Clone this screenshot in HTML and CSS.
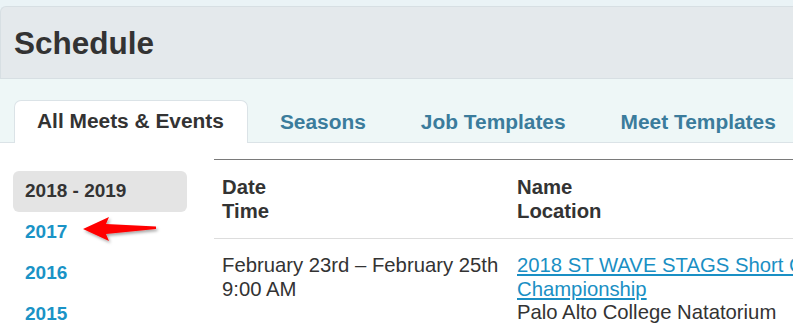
FILE: index.html
```html
<!DOCTYPE html>
<html>
<head>
<meta charset="utf-8">
<link rel="stylesheet" href="styles.css">
</head>
<body>
<div class="top-strip">
  <div class="header"><h1 class="title">Schedule</h1></div>
</div>
<div class="tabs">
  <div class="tab active">All Meets &amp; Events</div>
  <div class="tab">Seasons</div>
  <div class="tab">Job Templates</div>
  <div class="tab">Meet Templates</div>
</div>
<div class="main">
  <ul class="years">
    <li class="year current">2018 - 2019</li>
    <li class="year"><a href="#">2017</a></li>
    <li class="year"><a href="#">2016</a></li>
    <li class="year"><a href="#">2015</a></li>
  </ul>
  <table class="schedule">
    <colgroup><col class="col-date"><col class="col-name"><col class="col-rest"></colgroup>
    <thead>
      <tr><th>Date<br>Time</th><th>Name<br>Location</th><th></th></tr>
    </thead>
    <tbody>
      <tr>
        <td>February 23rd – February 25th<br>9:00 AM</td>
        <td><a href="#">2018 ST WAVE STAGS Short Course Championship</a><br>Palo Alto College Natatorium</td>
        <td></td>
      </tr>
    </tbody>
  </table>
  <svg class="arrow" viewBox="76 210 90 40" width="90" height="40">
    <defs>
      <filter id="sh" x="-20%" y="-40%" width="140%" height="180%">
        <feDropShadow dx="1.5" dy="2" stdDeviation="1.6" flood-color="#000" flood-opacity="0.35"/>
      </filter>
    </defs>
    <polygon points="83,229 109,217 106,224 156,226.6 156,229 106,234 109,241" fill="#ff0000" filter="url(#sh)"/>
  </svg>
</div>
</body>
</html>
```

FILE: styles.css
```css
html, body {
  margin: 0;
  padding: 0;
  overflow: hidden;
  background: #ffffff;
  font-family: "Liberation Sans", Arial, sans-serif;
  color: #333333;
}

.top-strip {
  background: #eaf3f6;
  padding-top: 6px;
}

.header {
  background: #e4e9ec;
  border-top: 1px solid #d7dfe3;
  border-left: 1px solid #d7dfe3;
  border-bottom: 1px solid #d7dfe3;
  border-top-left-radius: 6px;
  height: 71px;
  display: flex;
  align-items: center;
  padding-left: 13px;
}

.title {
  margin: 0;
  font-size: 31.5px;
  font-weight: bold;
  color: #333333;
  padding-top: 1px;
}

.tabs {
  background: #eef7f7;
  border-bottom: 1px solid #dbe3e7;
  height: 63px;
  display: flex;
  align-items: flex-end;
  gap: 9px;
  padding-left: 14px;
}

.tab {
  height: 41px;
  line-height: 38px;
  padding: 0 22px 3px;
  box-sizing: border-box;
  margin-bottom: -1px;
  font-size: 20.9px;
  font-weight: bold;
  color: #3b7c9c;
  border: 1px solid transparent;
  border-bottom: none;
  white-space: nowrap;
}

.tab.active {
  height: 43px;
  line-height: 39px;
  padding: 0 23px 3px 22px;
  background: #ffffff;
  border-color: #dbe3e7;
  border-radius: 7px 7px 0 0;
  color: #333333;
}

.main {
  position: relative;
  display: flex;
  align-items: flex-start;
  overflow: hidden;
}

.years {
  list-style: none;
  margin: 28px 0 0 13px;
  padding: 0;
  width: 174px;
  flex: none;
}

.year {
  height: 41px;
  line-height: 39px;
  padding-left: 12px;
  font-size: 19px;
  font-weight: bold;
}

.year a {
  color: #1a93c6;
  text-decoration: none;
}

.year.current {
  line-height: 40px;
  background: #e4e4e4;
  border-radius: 6px;
  color: #333333;
}

.schedule {
  margin: 16px 0 0 27px;
  border-collapse: collapse;
  table-layout: fixed;
  width: 1000px;
  flex: none;
  border-top: 1px solid #7a7a7a;
  font-size: 20.3px;
}

.col-date { width: 295px; }
.col-name { width: 420px; }

.schedule th {
  text-align: left;
  vertical-align: top;
  font-weight: bold;
  line-height: 24px;
  padding: 15px 8px;
  border-bottom: 1px solid #dddddd;
  color: #333333;
}

.schedule td {
  vertical-align: top;
  line-height: 23.5px;
  padding: 15px 8px;
  color: #333333;
}

.schedule td a {
  color: #1a8fc4;
  text-decoration: underline;
}

.arrow {
  position: absolute;
  left: 76px;
  top: 67px;
}
```
